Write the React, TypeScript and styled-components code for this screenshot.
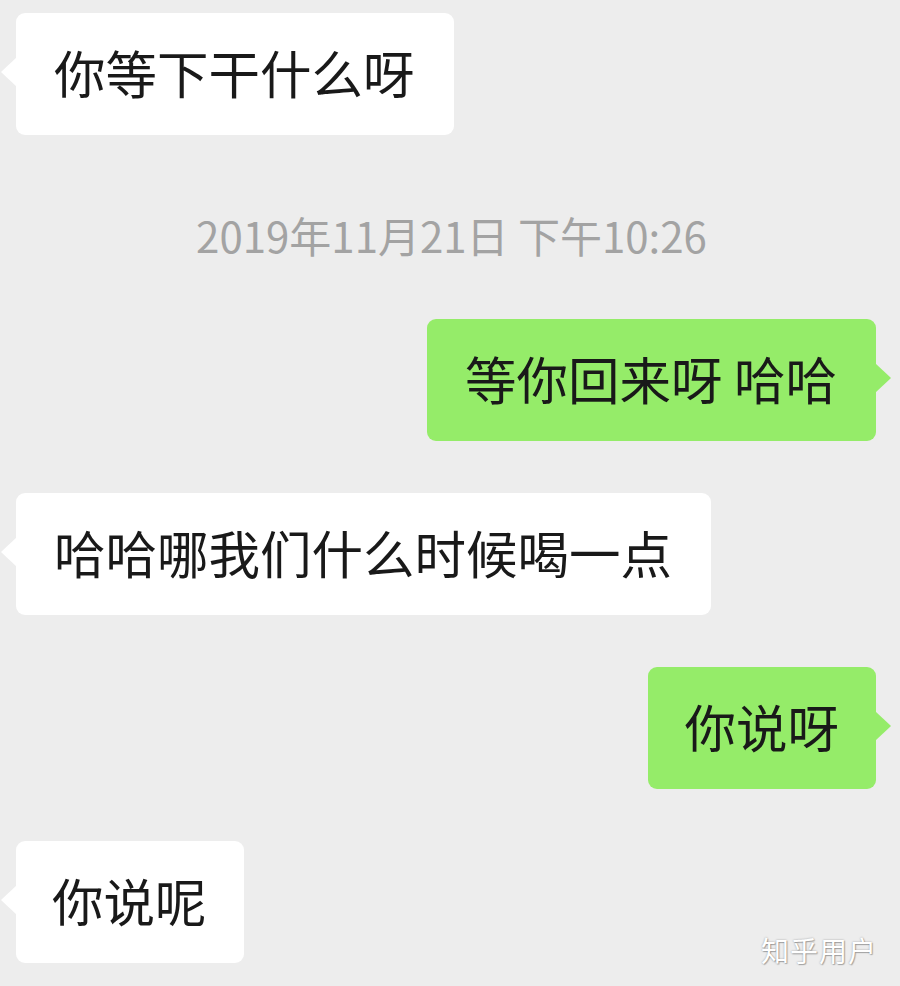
import React from "react";
import styled, { createGlobalStyle } from "styled-components";

const Global = createGlobalStyle`
  html, body { margin: 0; padding: 0; background: #ededed; }
  body { font-family: "Noto Sans CJK SC", "Noto Sans", sans-serif; }
`;

const Screen = styled.div`
  position: relative;
  width: 900px;
  height: 986px;
  background: #ededed;
  overflow: hidden;
  display: flex;
  flex-direction: column;
  padding: 13px 24px 0 16px;
  box-sizing: border-box;
`;

const Row = styled.div<{ $mine?: boolean; $gap?: number }>`
  display: flex;
  justify-content: ${(p) => (p.$mine ? "flex-end" : "flex-start")};
  margin-top: ${(p) => p.$gap ?? 52}px;
`;

const Bubble = styled.div<{ $mine?: boolean; $short?: boolean }>`
  position: relative;
  height: 122px;
  display: flex;
  align-items: center;
  padding: 0 ${(p) => (p.$short ? 37 : 39)}px 6px ${(p) => (p.$short ? 36 : 38)}px;
  border-radius: 9px;
  background: ${(p) => (p.$mine ? "#95ec69" : "#ffffff")};
  color: #191919;
  font-size: 51.5px;
  white-space: pre;
  box-sizing: border-box;

  &::before {
    content: "";
    position: absolute;
    top: 44px;
    ${(p) => (p.$mine ? "right: -15px;" : "left: -15px;")}
    width: 0;
    height: 0;
    border-top: 15px solid transparent;
    border-bottom: 15px solid transparent;
    ${(p) =>
      p.$mine
        ? "border-left: 16px solid #95ec69;"
        : "border-right: 16px solid #ffffff;"}
  }
`;

const Stamp = styled.div`
  margin-top: 78px;
  height: 44px;
  line-height: 44px;
  text-align: center;
  color: #a3a3a3;
  font-size: 42px;
  padding-left: 11px;
`;

const Watermark = styled.div`
  position: absolute;
  right: 23px;
  bottom: 16px;
  font-size: 28px;
  letter-spacing: 1px;
  color: #ffffff;
  text-shadow: 0 0 2px rgba(0, 0, 0, 0.35), 1px 1px 1px rgba(0, 0, 0, 0.25);
`;

export default function App() {
  return (
    <>
      <Global />
      <Screen>
        <Row $gap={0}>
          <Bubble>你等下干什么呀</Bubble>
        </Row>
        <Stamp>2019年11月21日 下午10:26</Stamp>
        <Row $mine $gap={62}>
          <Bubble $mine>等你回来呀 哈哈</Bubble>
        </Row>
        <Row>
          <Bubble>哈哈哪我们什么时候喝一点</Bubble>
        </Row>
        <Row $mine>
          <Bubble $mine $short>你说呀</Bubble>
        </Row>
        <Row>
          <Bubble $short>你说呢</Bubble>
        </Row>
        <Watermark>知乎用户</Watermark>
      </Screen>
    </>
  );
}
